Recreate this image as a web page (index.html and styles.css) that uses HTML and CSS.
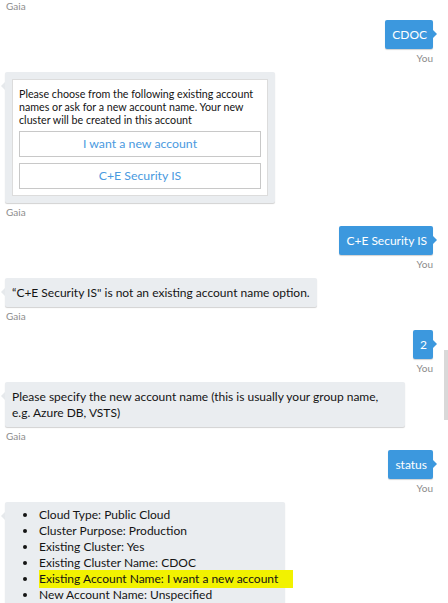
FILE: index.html
```html
<!DOCTYPE html>
<html>
<head>
<meta charset="utf-8">
<link rel="stylesheet" href="styles.css">
</head>
<body>
<div class="chat">
  <div class="from from-bot top">Gaia</div>

  <div class="msg me">
    <div class="bubble blue">CDOC<svg class="callout right" width="4" height="8" viewBox="0 0 4 8"><path d="M0 0 L4 4 L0 8 Z"/></svg></div>
    <div class="from">You</div>
  </div>

  <div class="msg bot">
    <div class="bubble gray card-wrap"><svg class="callout left" width="4" height="8" viewBox="0 0 4 8"><path d="M4 0 L0 4 L4 8 Z"/></svg>
      <div class="card">
        <p class="card-text">Please choose from the following existing account names or ask for a new account name. Your new cluster will be created in this account</p>
        <div class="card-btn">I want a new account</div>
        <div class="card-btn">C+E Security IS</div>
      </div>
    </div>
    <div class="from">Gaia</div>
  </div>

  <div class="msg me">
    <div class="bubble blue">C+E Security IS<svg class="callout right" width="4" height="8" viewBox="0 0 4 8"><path d="M0 0 L4 4 L0 8 Z"/></svg></div>
    <div class="from">You</div>
  </div>

  <div class="msg bot">
    <div class="bubble gray"><svg class="callout left" width="4" height="8" viewBox="0 0 4 8"><path d="M4 0 L0 4 L4 8 Z"/></svg>“C+E Security IS" is not an existing account name option.</div>
    <div class="from">Gaia</div>
  </div>

  <div class="msg me">
    <div class="bubble blue">2<svg class="callout right" width="4" height="8" viewBox="0 0 4 8"><path d="M0 0 L4 4 L0 8 Z"/></svg></div>
    <div class="from">You</div>
  </div>

  <div class="msg bot">
    <div class="bubble gray specify"><svg class="callout left" width="4" height="8" viewBox="0 0 4 8"><path d="M4 0 L0 4 L4 8 Z"/></svg>Please specify the new account name (this is usually your group name, e.g. Azure DB, VSTS)</div>
    <div class="from">Gaia</div>
  </div>

  <div class="msg me">
    <div class="bubble blue">status<svg class="callout right" width="4" height="8" viewBox="0 0 4 8"><path d="M0 0 L4 4 L0 8 Z"/></svg></div>
    <div class="from">You</div>
  </div>

  <div class="msg bot">
    <div class="bubble gray list-bubble"><svg class="callout left" width="4" height="8" viewBox="0 0 4 8"><path d="M4 0 L0 4 L4 8 Z"/></svg>
      <ul class="status-list">
        <li>Cloud Type: Public Cloud</li>
        <li>Cluster Purpose: Production</li>
        <li>Existing Cluster: Yes</li>
        <li>Existing Cluster Name: CDOC</li>
        <li><span class="hl">Existing Account Name: I want a new account</span></li>
        <li>New Account Name: Unspecified</li>
      </ul>
    </div>
  </div>
</div>
<div class="scrollthumb"></div>
</body>
</html>
```

FILE: styles.css
```css
html, body {
  margin: 0;
  padding: 0;
  background: #ffffff;
  height: 603px;
  overflow: hidden;
}

body {
  font-family: Lato, "Open Sans", sans-serif;
  color: #141414;
  position: relative;
}

.chat {
  padding: 1px 15px 0 5px;
  display: flex;
  flex-direction: column;
}

.from {
  font-size: 10px;
  line-height: 10px;
  color: #8c8c8c;
  margin-top: 4px;
}

.from.top {
  margin-top: 0;
  margin-left: 1px;
  margin-bottom: 9px;
}

.msg {
  display: flex;
  flex-direction: column;
  margin-bottom: 9px;
}

.msg.me {
  align-items: flex-end;
}

.msg.bot {
  align-items: flex-start;
}

.msg.bot .from {
  margin-left: 1px;
}

.bubble {
  position: relative;
  font-size: 12px;
  line-height: 16px;
  padding: 7px 7px 6px 7px;
  border-radius: 2px;
  box-shadow: 0 1px 1px rgba(0, 0, 0, 0.18);
}

.bubble.blue {
  background: #3c98de;
  color: #ffffff;
  padding-right: 6px;
}

.bubble.gray {
  background: #eaedf0;
  color: #141414;
}

.callout {
  position: absolute;
  top: 10px;
  display: block;
}

.callout.right {
  right: -4px;
  fill: #3c98de;
}

.callout.left {
  left: -4px;
  fill: #e6e9ec;
}

.specify {
  width: 400px;
  box-sizing: border-box;
}

.card-wrap {
  padding: 7px;
  width: 270px;
  box-sizing: border-box;
}

.card {
  background: #ffffff;
  border: 1px solid #dcdcdc;
  padding: 7px 6px 6px 6px;
}

.card-text {
  margin: 0 0 5px 0;
  font-size: 10.7px;
  line-height: 13px;
  color: #141414;
}

.card-btn {
  border: 1px solid #c8c8c8;
  height: 24px;
  line-height: 24px;
  text-align: center;
  font-size: 12.3px;
  color: #4a9ae0;
  background: #ffffff;
}

.card-btn + .card-btn {
  margin-top: 6px;
}

.list-bubble {
  width: 280px;
  box-sizing: border-box;
  padding: 5px 7px 4px 18px;
}

.status-list {
  list-style: none;
  margin: 0;
  padding: 0;
}

.status-list li {
  font-size: 12px;
  line-height: 16px;
  white-space: nowrap;
  display: flex;
  align-items: center;
}

.status-list li::before {
  content: "";
  width: 4px;
  height: 4px;
  border-radius: 50%;
  background: #141414;
  margin-right: 12px;
  flex: none;
}

.hl {
  display: inline-block;
  background: #f2f200;
  line-height: 16px;
  margin: -1px 0;
  padding: 1px 15px 1px 0;
}

.scrollthumb {
  position: absolute;
  right: 0;
  top: 350px;
  width: 4px;
  height: 70px;
  background: #d9d9d9;
}
```
